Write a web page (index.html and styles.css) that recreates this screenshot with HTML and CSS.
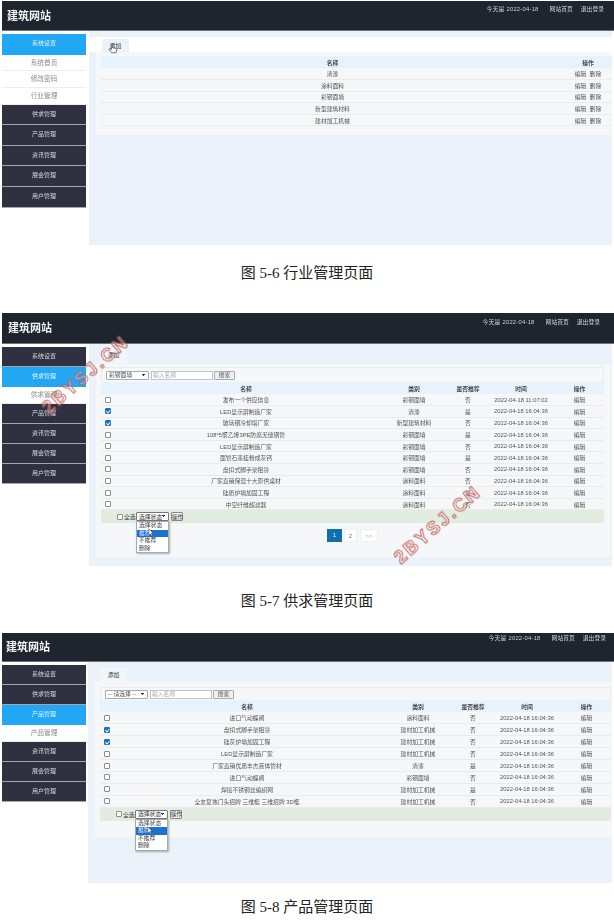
FILE: index.html
```html
<!DOCTYPE html>
<html lang="zh-CN">
<head>
    <meta charset="UTF-8">
    <meta name="viewport" content="width=device-width, initial-scale=1.0">
    <title>建筑网站</title>
    <link rel="stylesheet" href="styles.css">
</head>
<body>
<div class="page">

    <!-- 图 5-6 -->
    <section class="shot shot-one">
        <header class="top">
            <h1>建筑网站</h1>
            <div class="top-links"><span class="today">今天是 2022-04-18</span><span>网站首页</span><span>退出登录</span></div>
        </header>
        <div class="frame">
            <nav class="side">
                <a class="nav-on">系统设置</a>
                <a class="nav-sub">系统首页</a>
                <a class="nav-sub">修改密码</a>
                <a class="nav-sub">行业管理</a>
                <a>供求管理</a>
                <a>产品管理</a>
                <a>资讯管理</a>
                <a>展会管理</a>
                <a>用户管理</a>
            </nav>
            <main class="main">
                <div class="tabs"><span class="tab">添加</span>
                    <svg class="hand" viewBox="0 0 12 14"><path d="M4 1.500c0-1 1.500-1 1.500 0v4l3.500.8c1 .3 1.500.8 1.300 1.800l-.6 3.400H4.500L1.500 8c-.7-.9.4-1.700 1.200-1L4 8z" fill="#fff" stroke="#444" stroke-width=".9"/></svg>
                </div>
                <div class="panel">
                    <table class="grid">
                        <tr class="head-row"><th>名称</th><th class="col-op">操作</th></tr>
                        <tr><td>清漆</td><td>编辑&nbsp; 删除</td></tr>
                        <tr><td>涂料面料</td><td>编辑&nbsp; 删除</td></tr>
                        <tr><td>彩钢面墙</td><td>编辑&nbsp; 删除</td></tr>
                        <tr><td>新型建筑材料</td><td>编辑&nbsp; 删除</td></tr>
                        <tr><td>建材加工机械</td><td>编辑&nbsp; 删除</td></tr>
                    </table>
                </div>
            </main>
        </div>
    </section>
    <p class="caption caption-one">图 5-6 行业管理页面</p>

    <!-- 图 5-7 -->
    <section class="shot shot-two">
        <header class="top">
            <h1>建筑网站</h1>
            <div class="top-links"><span class="today">今天是 2022-04-18</span><span>网站首页</span><span>退出登录</span></div>
        </header>
        <div class="frame">
            <nav class="side">
                <a>系统设置</a>
                <a class="nav-on">供求管理</a>
                <a class="nav-sub">供求管理</a>
                <a>产品管理</a>
                <a>资讯管理</a>
                <a>展会管理</a>
                <a>用户管理</a>
            </nav>
            <main class="main">
                <div class="tabs"><span class="tab">添加</span></div>
                <div class="panel">
                    <div class="search">
                        <select><option>彩钢面墙</option></select>
                        <input type="text" placeholder="输入名称">
                        <button>搜索</button>
                    </div>
                    <table class="grid">
                        <tr class="head-row"><th class="col-check"></th><th>名称</th><th class="col-type">类别</th><th class="col-rec">是否推荐</th><th class="col-time">时间</th><th class="col-act">操作</th></tr>
                        <tr><td><input type="checkbox"></td><td>发布一个供应信息</td><td>彩钢面墙</td><td>否</td><td>2022-04-18 11:07:02</td><td>编辑</td></tr>
                        <tr><td><input type="checkbox" checked></td><td>LED显示屏制造厂家</td><td>清漆</td><td>是</td><td>2022-04-18 16:04:36</td><td>编辑</td></tr>
                        <tr><td><input type="checkbox" checked></td><td>玻璃钢冷却塔厂家</td><td>新型建筑材料</td><td>否</td><td>2022-04-18 16:04:36</td><td>编辑</td></tr>
                        <tr><td><input type="checkbox"></td><td>108*5聚乙烯3PE防腐无缝钢管</td><td>彩钢面墙</td><td>是</td><td>2022-04-18 16:04:36</td><td>编辑</td></tr>
                        <tr><td><input type="checkbox"></td><td>LED显示屏制造厂家</td><td>彩钢面墙</td><td>否</td><td>2022-04-18 16:04:36</td><td>编辑</td></tr>
                        <tr><td><input type="checkbox"></td><td>面管石墨挂粉成灰钙</td><td>彩钢面墙</td><td>是</td><td>2022-04-18 16:04:36</td><td>编辑</td></tr>
                        <tr><td><input type="checkbox"></td><td>盘扣式脚手架租赁</td><td>彩钢面墙</td><td>否</td><td>2022-04-18 16:04:36</td><td>编辑</td></tr>
                        <tr><td><input type="checkbox"></td><td>厂家直销保温十大原供桌材</td><td>涂料面料</td><td>否</td><td>2022-04-18 16:04:36</td><td>编辑</td></tr>
                        <tr><td><input type="checkbox"></td><td>硅质炉墙加固工程</td><td>涂料面料</td><td>是</td><td>2022-04-18 16:04:36</td><td>编辑</td></tr>
                        <tr><td><input type="checkbox"></td><td>中空纤维超滤器</td><td>涂料面料</td><td>否</td><td>2022-04-18 16:04:36</td><td>编辑</td></tr>
                    </table>
                    <div class="bulk">
                        <label><input type="checkbox">全选</label>
                        <select><option>选择状态</option></select>
                        <button>操作</button>
                        <ul class="menu">
                            <li>选择状态</li>
                            <li class="menu-on">推荐</li>
                            <li>不推荐</li>
                            <li>删除</li>
                        </ul>
                        <svg class="arrow" viewBox="0 0 8 12"><path d="M1 1v8.500l2-1.800 1.300 3 1.400-.6-1.300-2.900H7z" fill="#fff" stroke="#333" stroke-width=".7"/></svg>
                    </div>
                    <div class="pager"><span class="page-on">1</span><span>2</span><span class="page-next">&gt;&gt;</span></div>
                </div>
            </main>
        </div>
    </section>
    <p class="caption caption-two">图 5-7 供求管理页面</p>

    <!-- 图 5-8 -->
    <section class="shot shot-three">
        <header class="top">
            <h1>建筑网站</h1>
            <div class="top-links"><span class="today">今天是 2022-04-18</span><span>网站首页</span><span>退出登录</span></div>
        </header>
        <div class="frame">
            <nav class="side">
                <a>系统设置</a>
                <a>供求管理</a>
                <a class="nav-on">产品管理</a>
                <a class="nav-sub">产品管理</a>
                <a>资讯管理</a>
                <a>展会管理</a>
                <a>用户管理</a>
            </nav>
            <main class="main">
                <div class="tabs"><span class="tab">添加</span></div>
                <div class="panel">
                    <div class="search">
                        <select><option>-- 请选择 --</option></select>
                        <input type="text" placeholder="输入名称">
                        <button>搜索</button>
                    </div>
                    <table class="grid">
                        <tr class="head-row"><th class="col-check"></th><th>名称</th><th class="col-type">类别</th><th class="col-rec">是否推荐</th><th class="col-time">时间</th><th class="col-act">操作</th></tr>
                        <tr><td><input type="checkbox"></td><td>进口气动蝶阀</td><td>涂料面料</td><td>否</td><td>2022-04-18 16:04:36</td><td>编辑</td></tr>
                        <tr><td><input type="checkbox" checked></td><td>盘扣式脚手架租赁</td><td>建材加工机械</td><td>否</td><td>2022-04-18 16:04:36</td><td>编辑</td></tr>
                        <tr><td><input type="checkbox" checked></td><td>硅灰炉墙加固工程</td><td>建材加工机械</td><td>否</td><td>2022-04-18 16:04:36</td><td>编辑</td></tr>
                        <tr><td><input type="checkbox"></td><td>LED显示屏制造厂家</td><td>建材加工机械</td><td>否</td><td>2022-04-18 16:04:36</td><td>编辑</td></tr>
                        <tr><td><input type="checkbox"></td><td>厂家直销优质丰杰液体管材</td><td>清漆</td><td>是</td><td>2022-04-18 16:04:36</td><td>编辑</td></tr>
                        <tr><td><input type="checkbox"></td><td>进口气动蝶阀</td><td>彩钢面墙</td><td>否</td><td>2022-04-18 16:04:36</td><td>编辑</td></tr>
                        <tr><td><input type="checkbox"></td><td>焊接不锈钢丝编织网</td><td>建材加工机械</td><td>是</td><td>2022-04-18 16:04:36</td><td>编辑</td></tr>
                        <tr><td><input type="checkbox"></td><td>全友复熟门头招牌 三维框 三维招牌 3D框</td><td>建材加工机械</td><td>否</td><td>2022-04-18 16:04:36</td><td>编辑</td></tr>
                    </table>
                    <div class="bulk">
                        <label><input type="checkbox">全选</label>
                        <select><option>选择状态</option></select>
                        <button>操作</button>
                        <ul class="menu">
                            <li>选择状态</li>
                            <li class="menu-on">推荐</li>
                            <li>不推荐</li>
                            <li>删除</li>
                        </ul>
                        <svg class="arrow" viewBox="0 0 8 12"><path d="M1 1v8.500l2-1.800 1.300 3 1.400-.6-1.300-2.900H7z" fill="#fff" stroke="#333" stroke-width=".7"/></svg>
                    </div>
                </div>
            </main>
        </div>
    </section>
    <p class="caption caption-three">图 5-8 产品管理页面</p>

    <!-- watermarks over the second screenshot -->
    <span class="stamp stamp-left">2BYSJ.CN</span>
    <span class="stamp stamp-right">2BYSJ.CN</span>
</div>
</body>
</html>
```

FILE: styles.css
```css
* {
    box-sizing: border-box;
    margin: 0;
    padding: 0;
}

body {
    font-family: "Liberation Sans", "Noto Sans CJK SC", sans-serif;
    background-color: #fff;
    color: #555;
}

.page {
    position: relative;
    width: 614px;
    height: 920px;
    overflow: hidden;
}

/* One screenshot of the admin site */
.shot {
    margin-left: 2px;
    filter: blur(0.3px);
}

.shot-one {
    margin-top: 1px;
    --head-h: 30px;
    --nav-h: 20.6px;
    --main-h: 214px;
    --title-left: 5px;
    --links-right: 10px;
    --links-top: 4px;
}

.shot-two {
    --head-h: 31px;
    --nav-h: 20px;
    --main-h: 222px;
    --title-left: 6px;
    --links-right: 14px;
    --links-top: 5px;
}

.shot-three {
    --head-h: 29px;
    --nav-h: 20px;
    --main-h: 221px;
    --title-left: 4px;
    --links-right: 8px;
    --links-top: 1px;
}

.top {
    display: flex;
    justify-content: space-between;
    height: var(--head-h);
    padding-left: var(--title-left);
    padding-right: var(--links-right);
    background-color: #1e252e;
    border-bottom: 1px solid #6d7378;
}

.top h1 {
    font-size: 11px;
    line-height: var(--head-h);
    font-weight: 700;
    color: #f2f4f5;
}

.top-links {
    display: flex;
    gap: 8px;
    padding-top: var(--links-top);
    font-size: 5.800px;
    line-height: 8px;
    color: #cfd3d6;
}

.today {
    margin-right: 3px;
    letter-spacing: 0.25px;
}

.frame {
    display: flex;
}

/* Sidebar */
.side {
    width: 84px;
    margin-top: 3px;
    display: flex;
    flex-direction: column;
}

.side a {
    height: var(--nav-h);
    line-height: 19px;
    text-align: center;
    font-size: 6px;
    color: #d5d6dc;
    background-color: #2f3040;
    border-bottom: 1px solid #a4a6ad;
}

.side .nav-on {
    background-color: #22a7f5;
    color: #dff2fe;
    border-bottom: 0;
}

.side .nav-sub {
    height: 16.700px;
    line-height: 16px;
    font-size: 6.700px;
    color: #8a8a8a;
    background-color: #fff;
    border-bottom: 1px solid #eee;
}

/* Content area */
.main {
    width: 523px;
    height: var(--main-h);
    margin-left: 3px;
    background-color: #ebf2fa;
}

.shot-three .main {
    width: 524px;
    margin-left: 2px;
}

.tabs {
    position: relative;
    height: 20px;
    padding: 4px 0 0 11px;
}

.shot-one .tabs {
    height: 21px;
    padding: 8px 0 0 13px;
    background: linear-gradient(#ebf2fa 6px, #fff 6px);
}

.shot-three .tabs {
    padding: 6px 0 0 12px;
}

.tab {
    display: block;
    width: 27px;
    height: 100%;
    text-align: center;
    font-size: 5.800px;
    line-height: 14px;
    color: #333;
    background-color: #f1f6fb;
}

.shot-one .tab {
    background-color: #ebf2fa;
}

.hand {
    position: absolute;
    left: 19px;
    top: 12px;
    width: 10px;
    height: 12px;
}

.panel {
    margin-left: 7px;
    padding: 3px 6px 0 5px;
    background-color: #f5f7f8;
}

.shot-one .panel {
    height: 83px;
    padding: 4px 0 0 5px;
}

.shot-two .panel {
    width: 514px;
    height: 193px;
}

.shot-three .panel {
    height: 155px;
    padding: 5px 1px 0 5px;
}

.search {
    display: flex;
    align-items: center;
    height: 15px;
    padding-left: 4px;
    border: 1px solid #e9edee;
    border-bottom: 0;
}

.shot-three .search {
    height: 13px;
}

select,
input[type="text"],
button {
    font-family: inherit;
    font-size: 5.800px;
    color: #555;
    white-space: nowrap;
}

/* small native selects: the built-in arrow is too big at this scale */
select {
    appearance: none;
    padding-left: 2px;
    line-height: 6px;
    background-color: #fff;
    background-image: linear-gradient(45deg, transparent 50%, #333 50%), linear-gradient(135deg, #333 50%, transparent 50%);
    background-size: 2px 2px;
    background-position: calc(100% - 4px) 2px, calc(100% - 2px) 2px;
    background-repeat: no-repeat;
}

.search select {
    width: 43px;
    height: 9px;
    border: 1px solid #aaa;
    border-radius: 1px;
}

.search input[type="text"] {
    width: 62px;
    height: 9px;
    margin-left: 2px;
    padding-left: 1px;
    border: 1px solid #c4c4c4;
    background-color: #fff;
}

.search input::placeholder {
    color: #aaa;
}

.search button {
    width: 21px;
    height: 9px;
    margin-left: 1px;
    line-height: 6px;
    border: 1px solid #aaa;
    border-radius: 1px;
    background-color: #efefef;
}

/* Data tables */
.grid {
    width: 100%;
    table-layout: fixed;
    border-collapse: collapse;
    font-size: 5.800px;
}

.grid th {
    height: 12px;
    font-weight: 700;
    color: #444;
    background-color: #e6f2fc;
}

.grid td {
    height: 11.600px;
    text-align: center;
    border-bottom: 1px solid #e8ecec;
    white-space: nowrap;
}

.shot-three .grid td {
    height: 11.900px;
}

input[type="checkbox"] {
    appearance: none;
    position: relative;
    width: 6px;
    height: 6px;
    border: 1px solid #8b8f93;
    border-radius: 1px;
    background-color: #fff;
}

input[type="checkbox"]:checked {
    border-color: #1a6fc9;
    background-color: #1a6fc9;
}

input[type="checkbox"]:checked::after {
    content: "";
    position: absolute;
    left: 1px;
    top: 0;
    width: 1.500px;
    height: 2.500px;
    border: solid #fff;
    border-width: 0 0.7px 0.7px 0;
    transform: rotate(40deg);
}

.grid input[type="checkbox"] {
    display: block;
    margin-left: 4px;
}

.col-op { width: 48px; }
.col-check { width: 12px; }
.col-type { width: 70px; }
.col-rec { width: 38px; }
.col-time { width: 68px; }
.col-act { width: 49px; }

.shot-three .col-type { width: 72px; }
.shot-three .col-time { width: 70px; }

/* Bulk action bar with the open list */
.bulk {
    position: relative;
    display: flex;
    align-items: center;
    height: 13px;
    padding-left: 16px;
    font-size: 5.800px;
    color: #333;
    background-color: #e2ecdf;
}

.bulk label {
    display: flex;
    align-items: center;
    width: 19px;
}

.bulk input[type="checkbox"] {
    margin-right: 1px;
}

.bulk select {
    width: 33px;
    height: 9px;
    border: 1px solid #777;
    border-radius: 1px;
    color: #333;
}

.bulk button {
    width: 12px;
    height: 9px;
    margin-left: 2px;
    line-height: 6px;
    font-size: 5.400px;
    color: #333;
    border: 1px solid #888;
    border-radius: 1px;
    background-color: #efefef;
}

.menu {
    position: absolute;
    left: 35px;
    top: 11px;
    width: 33px;
    list-style: none;
    font-size: 5.800px;
    line-height: 7.500px;
    color: #444;
    background-color: #fff;
    border: 1px solid #aaa;
    box-shadow: 1px 1px 2px rgba(0, 0, 0, 0.3);
}

.menu li {
    padding-left: 2px;
}

.menu .menu-on {
    background-color: #1a73d1;
    color: #dce9f8;
}

.arrow {
    position: absolute;
    left: 47px;
    top: 18px;
    width: 6px;
    height: 9px;
}

.pager {
    display: flex;
    justify-content: center;
    gap: 2px;
    margin-top: 6px;
    font-size: 6px;
    line-height: 13px;
    text-align: center;
    color: #5f7f96;
}

.pager span {
    width: 13px;
    height: 13px;
    background-color: #fff;
    border: 1px solid #eef0f1;
}

.pager .page-on {
    width: 15px;
    color: #e6f1f8;
    background-color: #0f6fb1;
    border: 0;
}

.pager .page-next {
    width: 18px;
    margin-left: 1px;
    color: #aaa;
}

/* Figure captions */
.caption {
    font-family: "Liberation Serif", "Noto Sans CJK SC", serif;
    font-size: 15px;
    line-height: 20px;
    text-align: center;
    color: #222;
}

.caption-one { margin: 18px 0 30px; }
.caption-two { margin: 25px 0 22px; }
.caption-three { margin-top: 14px; }

/* Watermark */
.stamp {
    position: absolute;
    font-size: 18px;
    font-weight: 700;
    letter-spacing: 2.500px;
    white-space: nowrap;
    color: rgba(255, 255, 255, 0.35);
    -webkit-text-stroke: 0.9px #bf5a55;
    transform: translate(-50%, -50%) rotate(-41deg);
}

.stamp-left {
    left: 86px;
    top: 375px;
}

.stamp-right {
    left: 438px;
    top: 525px;
}
```
